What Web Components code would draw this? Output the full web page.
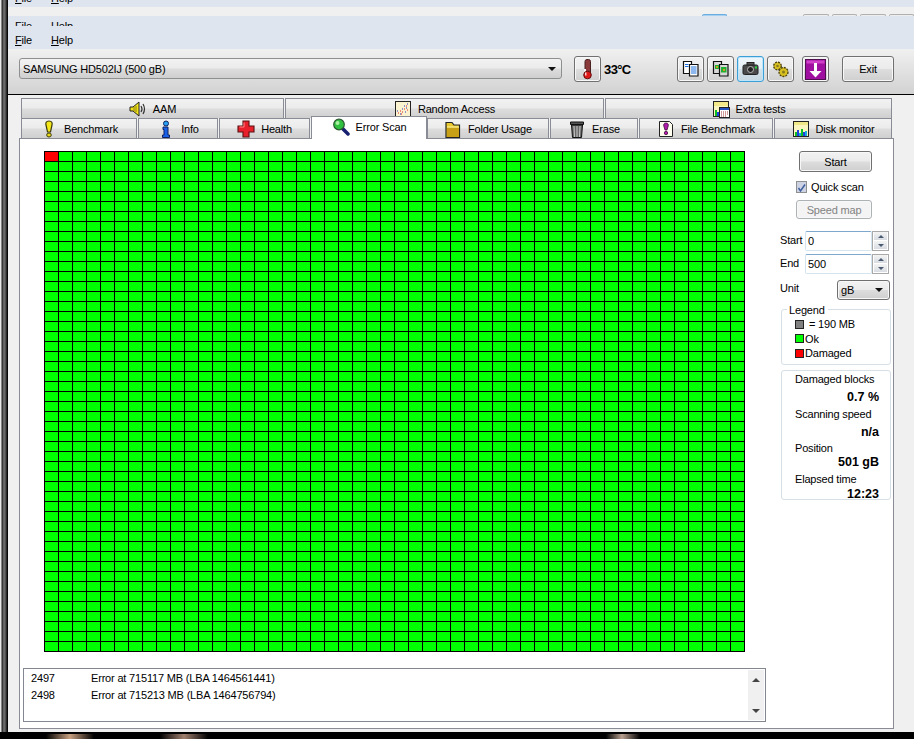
<!DOCTYPE html>
<html>
<head>
<meta charset="utf-8">
<title>HD Tune</title>
<style>
html, body { margin: 0; padding: 0; height: 739px; overflow: hidden; background: #f0f0f0; }
</style>
</head>
<body>
<hd-app></hd-app>
<script>
const ICONS = {
    speaker: `<path d="M1 7h3l6-5v14l-6-5H1z" fill="#f2e21c" stroke="#222"/><path d="M5 7v4M7 6v6" stroke="#8a7c10"/><path d="M12 6q2 3 0 6M14 4q3 5 0 10" fill="none" stroke="#333" stroke-width="1.2"/>`,
    random: `<rect x="1.5" y="1.5" width="15" height="15" fill="#fbf2cf" stroke="#222"/><path d="M4 13h1M6 11h1M8 12h1M10 9h1M12 6h1M13 10h1M7 14h1" stroke="#e02020"/><path d="M3 11h1M6 14h1M8 9h1M11 12h1M12 8h1M10 6h1M13 4h1" stroke="#2030c0"/>`,
    extra: `<rect x="1.5" y="1.5" width="15" height="15" fill="#fbf6c0" stroke="#222"/><rect x="2" y="2" width="14" height="4" fill="#f2e88a"/><path d="M3 10h2v6H3z" fill="#10c020"/><path d="M5 12h2v4H5z" fill="#2040e0"/><rect x="7.5" y="7.5" width="10" height="10" fill="#fff" stroke="#222"/><rect x="8" y="8" width="9" height="2" fill="#2050c0"/><path d="M9 12h1M11 12h1M13 12h1M15 12h1M9 14h1M11 14h1M13 14h1M15 14h1M9 16h1M11 16h1M13 16h1" stroke="#a03030"/>`,
    alert: `<path d="M9 1c3 0 3.5 2 3 4l-1.5 7h-3L6 5C5.500 3 6 1 9 1z" fill="#f5e81a" stroke="#3a3a10" stroke-width="1.200"/><ellipse cx="9" cy="15" rx="2.300" ry="2" fill="#e8d816" stroke="#3a3a10"/>`,
    info: `<circle cx="9" cy="3.500" r="2.500" fill="#28a0f0" stroke="#102060"/><path d="M6 7h5v8h1.500v2.500h-7V15H7V9.500H6z" fill="#1860e8" stroke="#102060"/>`,
    cross: `<path d="M6 1h6v5h5v6h-5v5H6v-5H1V6h5z" fill="#e8202c" stroke="#5a1010" stroke-width="1.100"/><path d="M7 2.500v4.500H2.500" fill="none" stroke="#f88"/>`,
    search: `<path d="M10 10l6 6" stroke="#182070" stroke-width="3.500" stroke-linecap="round"/><circle cx="7" cy="6.500" r="5.300" fill="#30c040" stroke="#2a5a30" stroke-width="1.200"/><circle cx="5.500" cy="5" r="2" fill="#a8f0a0"/>`,
    folder: `<path d="M2 5V2.500h6L10 5h5.500v12.500H2z" fill="#e8c830" stroke="#222" stroke-width="1.200"/><rect x="3" y="7" width="12" height="10" fill="#c8a018"/><path d="M3 7h12" stroke="#f8e880" stroke-width="1.500"/>`,
    trash: `<path d="M2.500 2h13v2.500h-13z" fill="#555" stroke="#111"/><path d="M3.500 5h11l-1 12.500h-9z" fill="#666" stroke="#111"/><path d="M6 6l.5 11M9 6v11M12 6l-.5 11" stroke="#ccc"/>`,
    file: `<path d="M2.500 1.500h10l3 3v12h-13z" fill="#fffdf0" stroke="#222"/><path d="M9 3c2.300 0 2.500 1.500 2.200 3L10 10H8L6.800 6C6.500 4.500 6.700 3 9 3z" fill="#b018a8" stroke="#401040" stroke-width=".800"/><circle cx="9" cy="13" r="1.700" fill="#b018a8" stroke="#401040" stroke-width=".800"/>`,
    monitor: `<rect x="1.500" y="1.500" width="15" height="15" fill="#fbf6c0" stroke="#222"/><rect x="2" y="2" width="14" height="3" fill="#f0e888"/><path d="M3 12h2v4H3zM9 9h2v7H9z" fill="#10c020"/><path d="M5 10h2v6H5zM11 12h2v4h-2z" fill="#2040e0"/><path d="M7 13h2v3H7zM13 11h2v5h-2z" fill="#18a8e0"/>`,
    thermo: `<rect x="8" y="1.500" width="5.500" height="15" rx="2" fill="#8a3a3a" stroke="#4a2020"/><rect x="7" y="11" width="2" height="6" fill="#f4f8fc"/><circle cx="10.500" cy="17" r="3.800" fill="#e01818" stroke="#601010"/><rect x="8" y="14.500" width="1.500" height="3" fill="#f8d0d0"/>`,
    copy: `<path d="M3.500 2.500h8v12h-8z" fill="#fff" stroke="#111" stroke-width="1.200"/><path d="M9.500 5.500h8.500v11.500H9.500z" fill="#fff" stroke="#111" stroke-width="1.200"/><path d="M11 8h5.500M11 10h5.500M11 12h5.500M11 14h5.500M5 5.500h3.500M5 7.500h3.500" stroke="#1c70e0"/>`,
    copyshot: `<path d="M3.500 2.500h8v12h-8z" fill="#d8d8d8" stroke="#111" stroke-width="1.200"/><path d="M9.500 5.500h8.500v11.500H9.500z" fill="#d8d8d8" stroke="#111" stroke-width="1.200"/><rect x="5" y="6" width="4" height="4" fill="#20b030"/><rect x="11" y="8" width="5.500" height="5.500" fill="#20b030"/><rect x="13" y="10" width="2" height="2" fill="#d0a020"/><rect x="6" y="7" width="2" height="2" fill="#d0a020"/>`,
    camera: `<rect x="3" y="6" width="15" height="9.500" rx="1.500" fill="#4a4a4a" stroke="#222"/><rect x="7" y="3.500" width="7" height="2.500" fill="#555" stroke="#222"/><circle cx="10.500" cy="10.500" r="3" fill="#222" stroke="#bbb"/><rect x="15" y="7.500" width="2" height="2" fill="#20e040"/>`,
    gears: `<path d="M7 5l9 10" stroke="#8a7a20" stroke-width="2"/><circle cx="7.500" cy="7" r="3.800" fill="#d8c020" stroke="#4a4010" stroke-width="1.300" stroke-dasharray="2 1"/><circle cx="7.500" cy="7" r="1.300" fill="#8a7a20"/><circle cx="13.500" cy="13" r="4.500" fill="#d8c020" stroke="#4a4010" stroke-width="1.300" stroke-dasharray="2 1"/><circle cx="13.500" cy="13" r="1.500" fill="#8a7a20"/>`,
    download: `<rect x=".5" y=".5" width="20" height="20" fill="#a010a0" stroke="#501050"/><rect x="1.500" y="1.500" width="18" height="3" fill="#d040c8"/><path d="M9 4h3v8h4.500l-6 6.500-6-6.500H9z" fill="#fff"/>`
};

class HdIcon extends HTMLElement {
    constructor() {
        super();
        this.attachShadow({ mode: 'open' });
    }

    connectedCallback() {
        const size = this.getAttribute('size') || 18;
        const view = this.getAttribute('view') || 18;
        this.shadowRoot.innerHTML = `
            <style>
                :host { display: block; width: ${size}px; height: ${size}px; flex: none; }
                svg { display: block; }
            </style>
            <svg width="${size}" height="${size}" viewBox="0 0 ${view} ${view}">${ICONS[this.getAttribute('name')] || ''}</svg>
        `;
    }
}

class HdButton extends HTMLElement {
    constructor() {
        super();
        this.attachShadow({ mode: 'open' });
        this.shadowRoot.innerHTML = `
            <style>
                :host {
                    display: flex;
                    align-items: center;
                    justify-content: center;
                    box-sizing: border-box;
                    flex: none;
                    border: 1px solid #707070;
                    border-radius: 3px;
                    box-shadow: inset 0 0 0 1px #f8f8f8;
                    background: linear-gradient(#f2f2f2 0, #ebebeb 48%, #dddddd 52%, #cfcfcf 100%);
                    color: #000;
                }
                :host([focused]) {
                    border-color: #3c9fd8;
                    box-shadow: inset 0 0 0 1px #bfe6f8;
                    background: linear-gradient(#f0f7fb 0, #e4eff5 48%, #d4e2ea 52%, #c8d8e0 100%);
                }
                :host([disabled]) {
                    border-color: #adb2b5;
                    background: #f4f4f4;
                    color: #838383;
                }
            </style>
            <slot></slot>
        `;
    }
}

class HdTab extends HTMLElement {
    constructor() {
        super();
        this.attachShadow({ mode: 'open' });
    }

    connectedCallback() {
        this.shadowRoot.innerHTML = `
            <style>
                :host {
                    display: flex;
                    align-items: center;
                    justify-content: center;
                    gap: 6px;
                    box-sizing: border-box;
                    height: 20px;
                    border: 1px solid #898c95;
                    border-bottom: 0;
                    margin-right: 1px;
                    padding-top: 1px;
                    background: linear-gradient(#f2f2f2 0, #ebebeb 48%, #dddddd 52%, #cfcfcf 100%);
                    overflow: hidden;
                }
                :host([selected]) {
                    height: 23px;
                    margin: -2px 0 -1px;
                    padding: 0 0 2px;
                    background: #fff;
                    position: relative;
                    z-index: 1;
                }
            </style>
            <hd-icon name="${this.getAttribute('icon')}"></hd-icon>
            <span>${this.getAttribute('label')}</span>
        `;
    }
}

class HdTabs extends HTMLElement {
    constructor() {
        super();
        this.attachShadow({ mode: 'open' });
        this.shadowRoot.innerHTML = `
            <style>
                :host { display: block; margin-left: 13px; }
                .row { display: grid; }
                .top { grid-template-columns: 264px 320px 287px; }
                .bottom { grid-template-columns: 117px 81px 92px 116px 123px 89px 135px 118px; }
                hd-tab:last-child { margin-right: 0; }
            </style>
            <div class="row top">
                <hd-tab icon="speaker" label="AAM"></hd-tab>
                <hd-tab icon="random" label="Random Access"></hd-tab>
                <hd-tab icon="extra" label="Extra tests"></hd-tab>
            </div>
            <div class="row bottom">
                <hd-tab icon="alert" label="Benchmark"></hd-tab>
                <hd-tab icon="info" label="Info"></hd-tab>
                <hd-tab icon="cross" label="Health"></hd-tab>
                <hd-tab icon="search" label="Error Scan" selected></hd-tab>
                <hd-tab icon="folder" label="Folder Usage"></hd-tab>
                <hd-tab icon="trash" label="Erase"></hd-tab>
                <hd-tab icon="file" label="File Benchmark"></hd-tab>
                <hd-tab icon="monitor" label="Disk monitor"></hd-tab>
            </div>
        `;
    }
}

class ScanMap extends HTMLElement {
    constructor() {
        super();
        this.attachShadow({ mode: 'open' });
        let cells = '';
        for (let i = 0; i < 2500; i++) {
            cells += i === 0 ? '<i class="bad"></i>' : '<i></i>';
        }
        this.shadowRoot.innerHTML = `
            <style>
                :host {
                    display: grid;
                    grid-template-columns: repeat(50, 13px);
                    grid-auto-rows: 9px;
                    gap: 1px;
                    padding: 1px;
                    width: 699px;
                    background: #000;
                }
                i { background: #00ff00; }
                i.bad { background: #ff0000; }
            </style>
            ${cells}
        `;
    }
}

class LogList extends HTMLElement {
    constructor() {
        super();
        this.attachShadow({ mode: 'open' });
        this.shadowRoot.innerHTML = `
            <style>
                :host {
                    display: flex;
                    box-sizing: border-box;
                    width: 743px;
                    height: 54px;
                    border: 1px solid #828790;
                    background: #fff;
                }
                .rows { flex: 1; padding: 1px 0 0 7px; }
                .row { display: flex; height: 17px; line-height: 17px; }
                .num { width: 60px; }
                .bar {
                    display: flex;
                    flex-direction: column;
                    align-items: center;
                    justify-content: space-between;
                    box-sizing: border-box;
                    width: 16px;
                    height: 50px;
                    margin: 1px 1px 0 0;
                    padding: 8px 0 7px;
                    background: #f0f0f0;
                }
                .up { border: 4px solid transparent; border-top: 0; border-bottom: 4px solid #444; }
                .down { border: 4px solid transparent; border-bottom: 0; border-top: 4px solid #444; }
            </style>
            <div class="rows">
                <div class="row"><span class="num">2497</span><span>Error at 715117 MB (LBA 1464561441)</span></div>
                <div class="row"><span class="num">2498</span><span>Error at 715213 MB (LBA 1464756794)</span></div>
            </div>
            <div class="bar"><span class="up"></span><span class="down"></span></div>
        `;
    }
}

class SpinField extends HTMLElement {
    constructor() {
        super();
        this.attachShadow({ mode: 'open' });
    }

    connectedCallback() {
        this.shadowRoot.innerHTML = `
            <style>
                :host { display: flex; align-items: center; height: 20px; }
                .label { width: 25px; margin-top: -2px; }
                .input {
                    box-sizing: border-box;
                    width: 67px;
                    height: 20px;
                    padding: 1px 0 0 2px;
                    line-height: 17px;
                    border: 1px solid #d5e5f0;
                    border-top-color: #7fa8cc;
                    border-radius: 2px;
                    background: #fff;
                }
                .spin {
                    display: flex;
                    flex-direction: column;
                    box-sizing: border-box;
                    width: 17px;
                    height: 20px;
                    border: 1px solid #a9a9a9;
                    background: #fff;
                }
                .spin b {
                    flex: 1;
                    display: flex;
                    align-items: center;
                    justify-content: center;
                    margin: 0 1px;
                    background: linear-gradient(#f4f4f4, #d8dce2);
                    border-bottom: 1px solid #fff;
                }
                .up { border: 3.500px solid transparent; border-top: 0; border-bottom: 3.500px solid #4a5a70; }
                .down { border: 3.500px solid transparent; border-bottom: 0; border-top: 3.500px solid #4a5a70; }
            </style>
            <span class="label">${this.getAttribute('label')}</span>
            <div class="input">${this.getAttribute('value')}</div>
            <div class="spin"><b><span class="up"></span></b><b><span class="down"></span></b></div>
        `;
    }
}

class LegendBox extends HTMLElement {
    constructor() {
        super();
        this.attachShadow({ mode: 'open' });
        this.shadowRoot.innerHTML = `
            <style>
                :host {
                    display: block;
                    box-sizing: border-box;
                    width: 110px;
                    height: 56px;
                    margin-left: 1px;
                    border: 1px solid #d5dfe5;
                    border-radius: 3px;
                }
                .title {
                    display: table;
                    height: 14px;
                    line-height: 14px;
                    margin: -7px 0 0 5px;
                    padding: 0 3px 0 2px;
                    background: #fff;
                }
                .row { display: flex; align-items: center; height: 14.500px; margin-left: 13px; }
                .row i { box-sizing: border-box; width: 9px; height: 9px; border: 1px solid #222; margin-right: 1px; }
                .first span { margin-left: 4px; }
            </style>
            <div class="title">Legend</div>
            <div class="row first"><i style="background:#808080"></i><span>= 190 MB</span></div>
            <div class="row"><i style="background:#00ff00"></i><span>Ok</span></div>
            <div class="row"><i style="background:#ff0000"></i><span>Damaged</span></div>
        `;
    }
}

class StatsBox extends HTMLElement {
    constructor() {
        super();
        this.attachShadow({ mode: 'open' });
        this.shadowRoot.innerHTML = `
            <style>
                :host {
                    display: block;
                    box-sizing: border-box;
                    width: 110px;
                    height: 130px;
                    margin-left: 1px;
                    padding-top: 1px;
                    border: 1px solid #d5dfe5;
                    border-radius: 3px;
                }
                div { height: 14px; line-height: 14px; margin-left: 13px; }
                .val { margin: 4px 11px 3px 0; text-align: right; font-weight: bold; font-size: 12.500px; letter-spacing: 0; }
            </style>
            <div>Damaged blocks</div>
            <div class="val">0.7 %</div>
            <div>Scanning speed</div>
            <div class="val" style="margin-bottom:2px">n/a</div>
            <div>Position</div>
            <div class="val" style="margin-top:0">501 gB</div>
            <div>Elapsed time</div>
            <div class="val" style="margin-top:1px">12:23</div>
        `;
    }
}

class SidePanel extends HTMLElement {
    constructor() {
        super();
        this.attachShadow({ mode: 'open' });
        this.shadowRoot.innerHTML = `
            <style>
                :host { display: block; width: 112px; margin-left: 14px; padding-top: 12px; }
                .start { width: 73px; height: 21px; margin-left: 19px; }
                .quick { display: flex; align-items: center; gap: 4px; height: 12px; margin: 9px 0 0 16px; }
                .check {
                    box-sizing: border-box;
                    width: 11px;
                    height: 12px;
                    border: 1px solid #8e8f8f;
                    background: #cdd3e2;
                }
                .speed { width: 76px; height: 19px; margin: 7px 0 0 16px; }
                .spin-start { margin-top: 12px; }
                .spin-end { margin-top: 3px; }
                .unit { display: flex; align-items: center; justify-content: space-between; height: 20px; margin-top: 6px; width: 110px; }
                .unit span { margin-top: -4px; }
                .select { width: 53px; height: 20px; justify-content: space-between; padding: 0 6px 0 3px; }
                .arrow { border: 4px solid transparent; border-bottom: 0; border-top: 4px solid #111; }
                legend-box { margin-top: 9px; }
                stats-box { margin-top: 5px; }
            </style>
            <hd-button class="start">Start</hd-button>
            <div class="quick">
                <div class="check"><svg width="9" height="10" viewBox="0 0 9 10"><path d="M1.500 5l2 3L8 1.500" fill="none" stroke="#3f5f9f" stroke-width="1.500"/></svg></div>
                <span>Quick scan</span>
            </div>
            <hd-button class="speed" disabled>Speed map</hd-button>
            <spin-field class="spin-start" label="Start" value="0"></spin-field>
            <spin-field class="spin-end" label="End" value="500"></spin-field>
            <div class="unit"><span>Unit</span><hd-button class="select"><span style="margin:0">gB</span><i class="arrow"></i></hd-button></div>
            <legend-box></legend-box>
            <stats-box></stats-box>
        `;
    }
}

class HdToolbar extends HTMLElement {
    constructor() {
        super();
        this.attachShadow({ mode: 'open' });
        this.shadowRoot.innerHTML = `
            <style>
                :host {
                    display: flex;
                    align-items: flex-start;
                    box-sizing: border-box;
                    height: 46px;
                    padding: 7px 0 0 11px;
                    border-bottom: 1px solid #000;
                    background: linear-gradient(#f0f0f0, #d2d2d2);
                }
                .drive {
                    display: flex;
                    align-items: center;
                    justify-content: space-between;
                    box-sizing: border-box;
                    width: 543px;
                    height: 21px;
                    margin: 2px 12px 0 0;
                    padding: 0 3px 0 3px;
                    border: 1px solid #8e8f8f;
                    border-radius: 3px;
                    background: linear-gradient(#f2f2f2 0, #ebebeb 48%, #dddddd 52%, #cfcfcf 100%);
                }
                .arrow { border: 4px solid transparent; border-bottom: 0; border-top: 4px solid #111; margin-right: 2px; }
                .tool { width: 27px; height: 26px; }
                .tool + .tool { margin-left: 3px; }
                .temp { margin: 6px 46px 0 3px; width: 27px; font-weight: bold; font-size: 13px; letter-spacing: -.6px; white-space: nowrap; line-height: 16px; }
                .exit { width: 52px; height: 26px; margin-left: 13px; }
            </style>
            <div class="drive"><span>SAMSUNG HD502IJ (500 gB)</span><i class="arrow"></i></div>
            <hd-button class="tool"><hd-icon name="thermo" size="22" view="22"></hd-icon></hd-button>
            <span class="temp">33°C</span>
            <hd-button class="tool"><hd-icon name="copy" size="21" view="21"></hd-icon></hd-button>
            <hd-button class="tool"><hd-icon name="copyshot" size="21" view="21"></hd-icon></hd-button>
            <hd-button class="tool" focused><hd-icon name="camera" size="21" view="21"></hd-icon></hd-button>
            <hd-button class="tool"><hd-icon name="gears" size="21" view="21"></hd-icon></hd-button>
            <hd-button class="tool" style="margin-left:8px"><hd-icon name="download" size="21" view="21"></hd-icon></hd-button>
            <hd-button class="exit">Exit</hd-button>
        `;
    }
}

class HdMenu extends HTMLElement {
    constructor() {
        super();
        this.attachShadow({ mode: 'open' });
        this.shadowRoot.innerHTML = `
            <style>
                :host { display: block; overflow: hidden; background: #dfe5ee; }
                .items { display: flex; gap: 19px; padding-left: 7px; height: 14px; line-height: 14px; }
            </style>
            <div class="items" part="items"><span><u>F</u>ile</span><span><u>H</u>elp</span></div>
        `;
    }
}

class HdApp extends HTMLElement {
    constructor() {
        super();
        this.attachShadow({ mode: 'open' });
        this.shadowRoot.innerHTML = `
            <style>
                :host {
                    display: flex;
                    width: 914px;
                    height: 739px;
                    overflow: hidden;
                    font: 11px/14px "Liberation Sans", Arial, sans-serif;
                    letter-spacing: -.18px;
                    color: #000;
                    background: #f0f0f0;
                }
                .rail {
                    flex: none;
                    width: 8px;
                    background: linear-gradient(90deg, #e8e8e8 0 1px, #222 2px, #777 4px, #444 6px, #111 7px, #000 8px);
                }
                .main { flex: 1; display: flex; flex-direction: column; min-width: 0; }
                .ghost-a { height: 7px; }
                .ghost-a::part(items) { margin-top: -9px; }
                .caps { display: flex; height: 9px; align-items: flex-end; padding-left: 694px; gap: 3px; }
                .caps i { box-sizing: border-box; width: 27px; height: 2px; border: 1px solid #b0b0b0; border-bottom: 0; border-radius: 2px 2px 0 0; background: #eee; }
                .caps i:first-child { border-color: #6aaee0; background: #a8d0f0; margin-right: 73px; }
                .ghost-b { height: 10px; }
                .ghost-b::part(items) { margin-top: 3px; }
                .menu { height: 23px; }
                .menu::part(items) { margin-top: 7px; }
                .body { flex: 1; padding-top: 3px; }
                .panel {
                    display: flex;
                    box-sizing: border-box;
                    width: 875px;
                    height: 591px;
                    margin-left: 11px;
                    border: 1px solid #898c95;
                    background: #fff;
                    padding-left: 3px;
                }
                scan-map { margin: 12px 0 16px 21px; }
                .frame {
                    height: 7px;
                    margin-left: -8px;
                    background: linear-gradient(90deg, #000 0 46px, #c8a080 70px, #000 94px, #000 160px, #a08070 184px, #000 208px, #000 606px, #b8a090 622px, #000 640px);
                    border-top: 2px solid #000;
                    box-sizing: border-box;
                }
            </style>
            <div class="rail"></div>
            <div class="main">
                <hd-menu class="ghost-a"></hd-menu>
                <div class="caps"><i></i><i></i><i></i><i></i><i></i></div>
                <hd-menu class="ghost-b"></hd-menu>
                <hd-menu class="menu"></hd-menu>
                <hd-toolbar></hd-toolbar>
                <div class="body">
                    <hd-tabs></hd-tabs>
                    <div class="panel">
                        <div>
                            <scan-map></scan-map>
                            <log-list></log-list>
                        </div>
                        <side-panel></side-panel>
                    </div>
                </div>
                <div class="frame"></div>
            </div>
        `;
    }
}

customElements.define('hd-icon', HdIcon);
customElements.define('hd-button', HdButton);
customElements.define('hd-tab', HdTab);
customElements.define('hd-tabs', HdTabs);
customElements.define('scan-map', ScanMap);
customElements.define('log-list', LogList);
customElements.define('spin-field', SpinField);
customElements.define('legend-box', LegendBox);
customElements.define('stats-box', StatsBox);
customElements.define('side-panel', SidePanel);
customElements.define('hd-toolbar', HdToolbar);
customElements.define('hd-menu', HdMenu);
customElements.define('hd-app', HdApp);
</script>
</body>
</html>
